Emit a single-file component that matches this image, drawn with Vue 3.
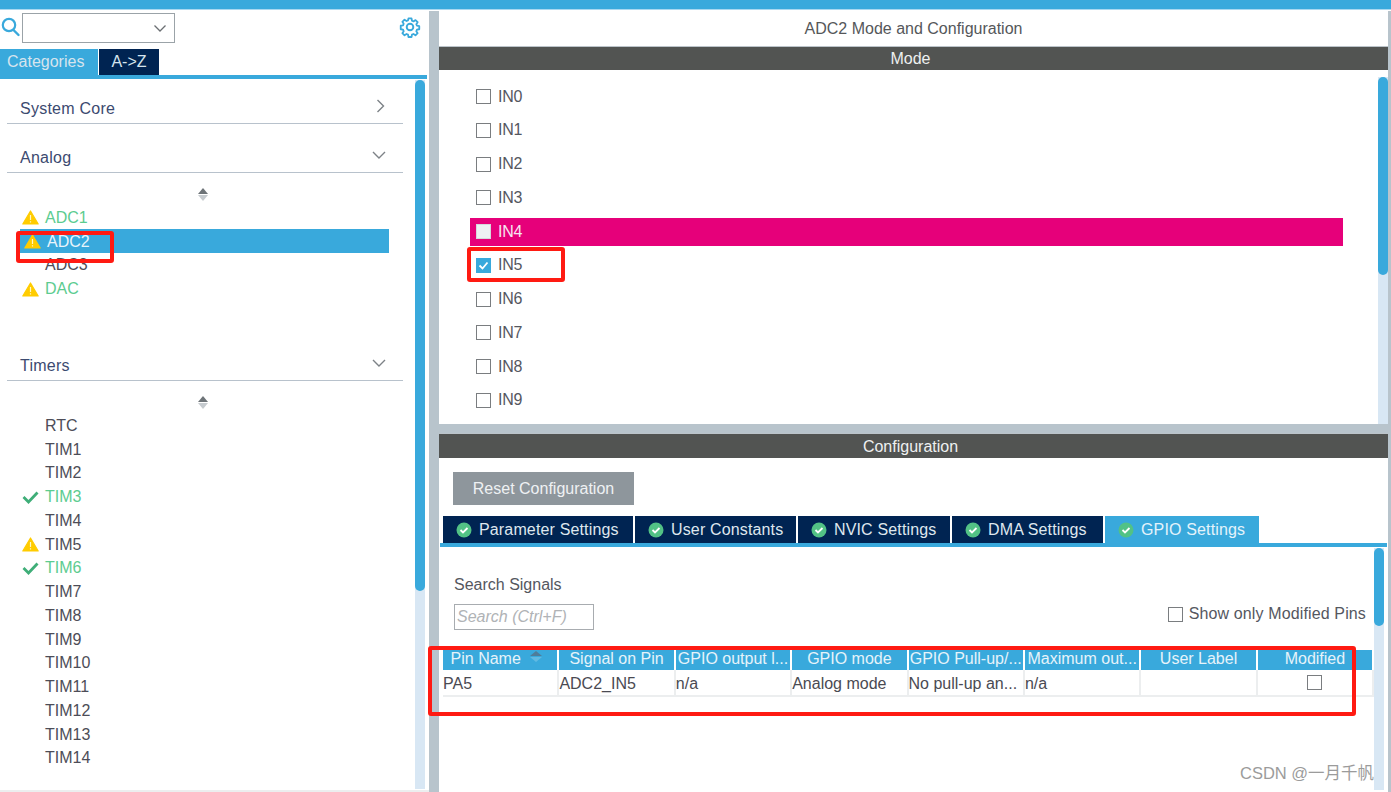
<script setup>
const analog = [
  { n: 'ADC1', s: 'warn', green: true },
  { n: 'ADC2', s: 'warn', sel: true },
  { n: 'ADC3', s: '' },
  { n: 'DAC', s: 'warn', green: true }
]
const timers = [
  { n: 'RTC', s: '' }, { n: 'TIM1', s: '' }, { n: 'TIM2', s: '' },
  { n: 'TIM3', s: 'ok', green: true }, { n: 'TIM4', s: '' },
  { n: 'TIM5', s: 'warn' }, { n: 'TIM6', s: 'ok', green: true },
  { n: 'TIM7', s: '' }, { n: 'TIM8', s: '' }, { n: 'TIM9', s: '' },
  { n: 'TIM10', s: '' }, { n: 'TIM11', s: '' }, { n: 'TIM12', s: '' },
  { n: 'TIM13', s: '' }, { n: 'TIM14', s: '' }
]
const inputs = ['IN0', 'IN1', 'IN2', 'IN3', 'IN4', 'IN5', 'IN6', 'IN7', 'IN8', 'IN9']
const tabs = [
  { n: 'Parameter Settings', w: 190 },
  { n: 'User Constants', w: 161 },
  { n: 'NVIC Settings', w: 152 },
  { n: 'DMA Settings', w: 151 },
  { n: 'GPIO Settings', w: 154, active: true }
]
const heads = ['Pin Name', 'Signal on Pin', 'GPIO output l...', 'GPIO mode', 'GPIO Pull-up/...', 'Maximum out...', 'User Label', 'Modified']
const cells = ['PA5', 'ADC2_IN5', 'n/a', 'Analog mode', 'No pull-up an...', 'n/a', '', '']
</script>

<template>
  <div class="page">
    <div class="topbar"></div>
    <div class="main">
      <aside class="left">
        <div class="toolbar">
          <svg class="search" width="20" height="22" viewBox="0 0 20 22"><circle cx="8" cy="9" r="6.2" fill="none" stroke="#39a9dc" stroke-width="2.2"/><path d="M12.5 14l5 5" stroke="#39a9dc" stroke-width="2.4" stroke-linecap="round"/></svg>
          <div class="select">
            <svg width="14" height="9" viewBox="0 0 14 9"><path d="M1.5 1.5L7 7l5.500-5.500" fill="none" stroke="#6b6f73" stroke-width="1.300"/></svg>
          </div>
          <svg class="gear" width="22" height="22" viewBox="0 0 22 22">
            <path d="M9.300 1.500h3.400l.5 2.600 1.700.7 2.200-1.500 2.400 2.400-1.500 2.200.7 1.700 2.600.5v3.400l-2.600.5-.7 1.700 1.500 2.200-2.400 2.400-2.200-1.500-1.700.7-.5 2.600H9.300l-.5-2.600-1.700-.7-2.200 1.500-2.400-2.400 1.500-2.200-.7-1.700-2.600-.5V9.600l2.600-.5.7-1.700-1.500-2.200 2.400-2.400 2.200 1.500 1.700-.7z" transform="translate(1.100 1.100) scale(.9)" fill="none" stroke="#39a9dc" stroke-width="2" stroke-linejoin="round"/>
            <circle cx="11" cy="11" r="3.300" fill="none" stroke="#39a9dc" stroke-width="1.900"/>
          </svg>
        </div>
        <div class="cat-tabs">
          <div class="cat-tab on">Categories</div>
          <div class="cat-tab">A-&gt;Z</div>
        </div>
        <div class="left-body">
          <div class="tree">
            <div class="sec first">
              <span>System Core</span>
              <svg width="12" height="16" viewBox="0 0 12 16"><path d="M2.500 2l6 6-6 6" fill="none" stroke="#7d8287" stroke-width="1.400"/></svg>
            </div>
            <div class="sec">
              <span>Analog</span>
              <svg width="16" height="12" viewBox="0 0 16 12"><path d="M2 3l6 6 6-6" fill="none" stroke="#7d8287" stroke-width="1.400"/></svg>
            </div>
            <div class="updown"><i class="up"></i><i class="down"></i></div>
            <div v-for="r in analog" :key="r.n" class="row" :class="{ sel: r.sel, green: r.green }">
              <span class="ico">
                <svg v-if="r.s === 'warn'" width="17" height="15" viewBox="0 0 17 15"><path d="M8.500 1L16.200 14H.8z" fill="#ffcc00" stroke="#ffcc00" stroke-width="1.200" stroke-linejoin="round"/><path d="M8.500 5v5M8.500 11.300v1.200" stroke="#fff6c8" stroke-width="1.200"/></svg>
              </span>
              <span>{{ r.n }}</span>
            </div>
            <div class="sec timers">
              <span>Timers</span>
              <svg width="16" height="12" viewBox="0 0 16 12"><path d="M2 3l6 6 6-6" fill="none" stroke="#7d8287" stroke-width="1.400"/></svg>
            </div>
            <div class="updown"><i class="up"></i><i class="down"></i></div>
            <div v-for="r in timers" :key="r.n" class="row" :class="{ green: r.green }">
              <span class="ico">
                <svg v-if="r.s === 'warn'" width="17" height="15" viewBox="0 0 17 15"><path d="M8.500 1L16.200 14H.8z" fill="#ffcc00" stroke="#ffcc00" stroke-width="1.200" stroke-linejoin="round"/><path d="M8.500 5v5M8.500 11.300v1.200" stroke="#fff6c8" stroke-width="1.200"/></svg>
                <svg v-else-if="r.s === 'ok'" width="17" height="14" viewBox="0 0 17 14"><path d="M1.500 7l5 5L15.500 2.500" fill="none" stroke="#3fae78" stroke-width="2.800"/></svg>
              </span>
              <span>{{ r.n }}</span>
            </div>
          </div>
          <div class="scroll left-scroll"><div class="thumb"></div></div>
        </div>
      </aside>
      <div class="vgutter"></div>
      <section class="right">
        <div class="title">ADC2 Mode and Configuration</div>
        <div class="bar mode-bar">Mode</div>
        <div class="mode">
          <div class="inputs">
            <div v-for="i in inputs" :key="i" class="input" :class="{ pink: i === 'IN4' }">
              <span class="cb" :class="{ checked: i === 'IN5', dis: i === 'IN4' }">
                <svg v-if="i === 'IN5'" width="15" height="15" viewBox="0 0 15 15"><path d="M3.500 7.500l3 3 5-6" fill="none" stroke="#fff" stroke-width="1.800"/></svg>
              </span>
              <span>{{ i }}</span>
            </div>
          </div>
          <div class="scroll mode-scroll"><div class="thumb"></div></div>
        </div>
        <div class="hgutter"></div>
        <div class="bar">Configuration</div>
        <div class="config">
          <button class="reset">Reset Configuration</button>
          <div class="tabs">
            <div v-for="t in tabs" :key="t.n" class="tab" :class="{ active: t.active }" :style="{ width: t.w + 'px' }">
              <svg width="16" height="16" viewBox="0 0 16 16"><circle cx="8" cy="8" r="7.500" fill="#52c285"/><path d="M4.500 8l2.500 2.500L11.500 6" fill="none" stroke="#fff" stroke-width="1.800"/></svg>
              <span>{{ t.n }}</span>
            </div>
          </div>
          <div class="pane">
            <div class="pane-body">
              <div class="search-label">Search Signals</div>
              <div class="search-row">
                <div class="search-box">Search (Ctrl+F)</div>
                <label class="only"><span class="cb"></span><span>Show only Modified Pins</span></label>
              </div>
              <div class="thead">
                <div v-for="(h, i) in heads" :key="h" class="th">
                  <span>{{ h }}</span>
                  <span v-if="i === 0" class="updown small"><i class="up"></i><i class="down"></i></span>
                </div>
              </div>
              <div class="tbody">
                <div v-for="(c, i) in cells" :key="i" class="td" :class="{ center: i === 7 }">
                  <span v-if="i === 7" class="cb"></span>
                  <template v-else>{{ c }}</template>
                </div>
              </div>
            </div>
            <div class="scroll pane-scroll"><div class="thumb"></div></div>
          </div>
        </div>
      </section>
      <div class="edge"></div>
    </div>
    <div class="mark m1"></div>
    <div class="mark m2"></div>
    <div class="mark m3"></div>
    <div class="water">CSDN @一月千帆</div>
  </div>
</template>

<style>
html, body { margin: 0; overflow: hidden; background: #fff; }
</style>

<style scoped>
.page {
  position: relative;
  width: 1391px;
  height: 792px;
  overflow: hidden;
  font-family: "Liberation Sans", Roboto, sans-serif;
  font-size: 16px;
  color: #4d4d57;
  background: #fff;
}
.topbar { height: 10px; background: #39a9dc; border-bottom: 1px solid #a9d8f0; box-sizing: border-box; }
.main { display: flex; height: 782px; }

.left { width: 429px; flex: none; display: flex; flex-direction: column; }
.toolbar { height: 39px; flex: none; display: flex; align-items: flex-start; position: relative; padding-top: 3px; box-sizing: border-box; }
.search { margin-top: 3px; margin-left: 1px; flex: none; }
.select {
  width: 153px; height: 30px; margin-left: 1px; box-sizing: border-box;
  border: 1px solid #9ba3a8; display: flex; align-items: center; justify-content: flex-end; padding-right: 7px;
}
.gear { margin-left: auto; margin-right: 8px; margin-top: 3px; }
.cat-tabs { height: 26px; flex: none; display: flex; border-bottom: 4px solid #39a9dc; width: 427px; }
.cat-tab { width: 60px; background: #002452; color: #d6e4ee; text-align: center; line-height: 26px; }
.cat-tab.on { width: 98px; margin-right: 1px; background: #39a9dc; text-align: left; padding-left: 7px; box-sizing: border-box; }
.left-body { flex: 1; display: flex; min-height: 0; border-bottom: 2px solid #eceeef; }
.tree { width: 415px; flex: none; box-sizing: border-box; padding: 15px 0 0 0; overflow: hidden; }
.sec {
  height: 30px; margin: 0 12px 0 7px; padding: 0 16px 0 13px; box-sizing: border-box;
  border-bottom: 1px solid #b8c2cc; display: flex; align-items: center; justify-content: space-between;
  color: #3c4a70; letter-spacing: .25px;
}
.sec svg { margin-bottom: 5px; }
.sec.first { margin-bottom: 19px; }
.sec.timers { margin-top: 51px; }
.updown { height: 32px; display: flex; flex-direction: column; align-items: center; justify-content: flex-end; gap: 1px; width: 406px; padding-bottom: 4px; box-sizing: border-box; }
.updown i { display: block; width: 0; height: 0; border-left: 5px solid transparent; border-right: 5px solid transparent; }
.updown .up { border-bottom: 6px solid #6e7478; }
.updown .down { border-top: 6px solid #c6cbcf; }
.row {
  height: 23.750px; margin-left: 20px; width: 369px; display: flex; align-items: center; box-sizing: border-box; padding-top: 2px;
  color: #4d4d57;
}
.row.green { color: #5ccc90; }
.row.sel { background: #39a9dc; color: #e8f4fb; padding-left: 2px; }
.ico { width: 25px; flex: none; display: flex; align-items: center; padding-left: 2px; box-sizing: border-box; }
.scroll { background: #d8e7f4; width: 10px; flex: none; }
.thumb { background: #39a9dc; width: 10px; border-radius: 5px 5px 5px 5px; }
.left-scroll { height: 709px; margin-top: 1px; }
.left-scroll .thumb { height: 511px; }

.vgutter { width: 10px; flex: none; background: #b8c4cc; margin-top: 1px; }
.right { width: 949px; flex: none; display: flex; flex-direction: column; }
.edge { width: 3px; flex: none; background: #b8c4cc; margin-top: 1px; }
.title { height: 37px; flex: none; text-align: center; line-height: 37px; color: #55575a; }
.bar {
  height: 24px; flex: none; background: #525452; color: #eef0f0; text-align: center; line-height: 25px;
  box-shadow: 0 -1px 0 #bcc4ca; padding-right: 6px; box-sizing: border-box;
}
.mode-bar { height: 23px; line-height: 24px; }
.mode { height: 354px; flex: none; display: flex; }
.inputs { width: 939px; flex: none; box-sizing: border-box; padding: 12.500px 0 0 31px; overflow: hidden; }
.input {
  height: 28px; margin-bottom: 5.750px; width: 873px; display: flex; align-items: center; padding-left: 6px; box-sizing: border-box;
  color: #55575f; letter-spacing: -.3px;
}
.input.pink { background: #e6007a; color: #f6e6f0; }
.cb {
  width: 15px; height: 15px; box-sizing: border-box; border: 1.500px solid #7a7d80; background: #fff;
  display: inline-block; flex: none; margin-right: 7px;
}
.cb.dis { background: #eef0f3; border-color: #d5d8dc; }
.cb.checked { background: #39a9dc; border: 0; }
.mode-scroll { height: 347px; margin-top: 7px; }
.mode-scroll .thumb { height: 198px; }
.hgutter { height: 10px; flex: none; background: #b8c4cc; width: 952px; }
.config { flex: 1; display: flex; flex-direction: column; min-height: 0; }
.reset {
  align-self: flex-start; margin: 14px 0 0 14px; width: 181px; height: 33px; border: 0; padding: 0;
  background: #8e969c; color: #eef1f3; font: inherit;
}
.tabs { display: flex; margin: 11px 0 0 4px; height: 27px; flex: none; }
.tab {
  height: 27px; background: #002452; color: #dfe7ee; display: flex; align-items: center; box-sizing: border-box;
  margin-right: 2px; padding-left: 13px; letter-spacing: .15px; flex: none;
}
.tab svg { margin-right: 7px; flex: none; }
.tab.active { background: #39a9dc; color: #e4f3fb; }
.pane { flex: 1; min-height: 0; display: flex; margin-left: 1px; border-top: 4px solid #39a9dc; width: 947px; }
.pane-body { width: 934px; flex: none; box-sizing: border-box; padding: 28px 0 0 3px; }
.scroll.pane-scroll { height: 242px; margin-top: 1px; }
.pane-scroll .thumb { height: 78px; }
.search-label { margin-left: 11px; line-height: 20px; color: #55575f; }
.search-row { display: flex; justify-content: space-between; margin: 9px 8px 0 11px; align-items: flex-start; }
.search-box {
  width: 140px; height: 26px; box-sizing: border-box; border: 1px solid #a8acb0; font-style: italic;
  color: #b0b3b6; line-height: 24px; padding-left: 2px; white-space: nowrap; overflow: hidden;
}
.only { display: flex; align-items: center; height: 18px; margin-top: 1px; color: #55575f; letter-spacing: .13px; }
.only .cb { margin-right: 6px; }
.thead { display: flex; gap: 2px; margin-top: 20px; }
.th {
  width: 114.400px; height: 20px; flex: none; background: #39a9dc; color: #e6f3fa; line-height: 18px; text-align: center;
  white-space: nowrap; overflow: hidden; display: flex; justify-content: center; gap: 9px;
}
.th:first-child { padding-right: 8px; box-sizing: border-box; }
.tbody { display: flex; height: 27px; border-bottom: 2px solid #eceeef; box-sizing: border-box; }
.td {
  width: 116.400px; box-sizing: border-box; flex: none; line-height: 27px; border-right: 2px solid #eceeef;
  color: #4a4a52; white-space: nowrap; overflow: hidden;
}
.td.center { display: flex; align-items: center; justify-content: center; }
.td.center .cb { margin: 0; }
.updown.small { width: auto; height: 14px; padding: 0; justify-content: flex-start; margin-top: 1px; }
.updown.small i { border-left-width: 6px; border-right-width: 6px; }
.updown.small .up { border-bottom: 5px solid #4f7d9a; }
.updown.small .down { border-top: 5px solid #62bae2; }

.mark { position: absolute; border: 4px solid #ff1a12; border-radius: 3px; box-sizing: border-box; }
.m1 { left: 16px; top: 231px; width: 98px; height: 32px; }
.m2 { left: 467px; top: 247px; width: 98px; height: 35px; }
.m3 { left: 428px; top: 646px; width: 928px; height: 70px; }
.water {
  position: absolute; left: 1240px; top: 760px; color: #9b9b9b; font-size: 16.500px; white-space: nowrap;
  font-family: "Liberation Sans", "Noto Sans CJK SC", sans-serif;
}
</style>
